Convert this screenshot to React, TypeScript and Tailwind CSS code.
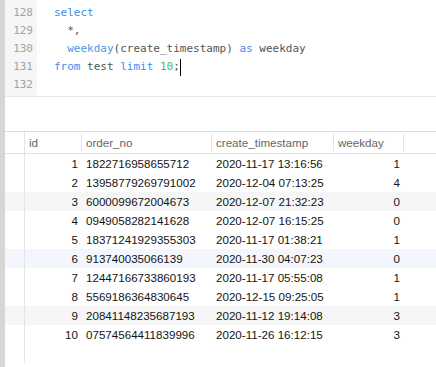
import React from "react";

const rows = [
  { id: 1, order: "1822716958655712", ts: "2020-11-17 13:16:56", wd: 1 },
  { id: 2, order: "13958779269791002", ts: "2020-12-04 07:13:25", wd: 4 },
  { id: 3, order: "6000099672004673", ts: "2020-12-07 21:32:23", wd: 0 },
  { id: 4, order: "0949058282141628", ts: "2020-12-07 16:15:25", wd: 0 },
  { id: 5, order: "18371241929355303", ts: "2020-11-17 01:38:21", wd: 1 },
  { id: 6, order: "913740035066139", ts: "2020-11-30 04:07:23", wd: 0 },
  { id: 7, order: "12447166733860193", ts: "2020-11-17 05:55:08", wd: 1 },
  { id: 8, order: "5569186364830645", ts: "2020-12-15 09:25:05", wd: 1 },
  { id: 9, order: "20841148235687193", ts: "2020-11-12 19:14:08", wd: 3 },
  { id: 10, order: "07574564411839996", ts: "2020-11-26 16:12:15", wd: 3 },
];

const mono = { fontFamily: '"DejaVu Sans Mono", "Liberation Mono", monospace' };

function Kw({ children }: { children: React.ReactNode }) {
  return <span className="text-[#3d8ced]">{children}</span>;
}

function rowBg(i: number) {
  // every third row gets a stripe, alternating gray / blue
  if (i % 3 !== 2) return "bg-white";
  return Math.floor(i / 3) % 2 === 0 ? "bg-[#f6f6f6]" : "bg-[#f3f6fc]";
}

function HeadCell({ w, children }: { w: string; children: React.ReactNode }) {
  return (
    <div className={`flex h-full shrink-0 items-center ${w}`}>
      <div className="flex-1 pl-[4px]">{children}</div>
      <div className="h-[17px] w-px bg-[#e2e2e2]" />
    </div>
  );
}

export default function App() {
  const lines = [128, 129, 130, 131, 132];
  const tableRows = [...rows.map((r) => r as (typeof rows)[number] | null), null];

  return (
    <div
      className="flex w-[436px] h-[367px] overflow-hidden bg-white"
      style={{ fontFamily: '"Liberation Sans", Arial, sans-serif' }}
    >
      <div className="w-[5px] shrink-0 bg-[#d6d6d6]" />

      <div className="flex flex-1 flex-col">
        {/* Editor */}
        <div className="flex h-[97px] shrink-0 border-b border-[#e8e8e8]" style={mono}>
          <div className="w-[32px] shrink-0 bg-[#f6f6f6] pt-[4px] pr-[4px] text-right text-[11px] leading-[18px] text-[#a3a3a3]">
            {lines.map((n) => (
              <div key={n}>{n}</div>
            ))}
          </div>
          <div className="flex-1 bg-white pt-[4px] pl-[17px] text-[11px] leading-[18px] text-[#555] whitespace-pre">
            <div>
              <Kw>select</Kw>
            </div>
            <div>{"  *,"}</div>
            <div>
              {"  "}
              <span className="text-[#4a98e6]">weekday</span>(create_timestamp) <Kw>as</Kw> weekday
            </div>
            <div>
              <Kw>from</Kw> test <Kw>limit</Kw> <span className="text-[#3ebd6b]">10</span>;
              <span className="inline-block h-[17px] w-px bg-black align-middle" />
            </div>
            <div>&nbsp;</div>
          </div>
        </div>

        <div className="h-[34px] shrink-0" />

        {/* Result grid */}
        <div className="flex-1 border-t border-[#dcdcdc] text-[11.6px]">
          <div className="flex h-[22px] items-center border-b border-[#e2e2e2] text-[#666]">
            <div className="h-full w-[20px] shrink-0 border-r border-[#e4e4e4]" />
            <HeadCell w="w-[57px]">id</HeadCell>
            <HeadCell w="w-[130px]">order_no</HeadCell>
            <HeadCell w="w-[122px]">create_timestamp</HeadCell>
            <HeadCell w="w-[70px]">weekday</HeadCell>
          </div>

          {tableRows.map((r, i) => (
            <div key={i} className={`flex h-[19px] items-center text-[#141414] ${rowBg(i)}`}>
              <div className="h-full w-[20px] shrink-0 border-r border-[#e4e4e4]" />
              <div className="w-[57px] pr-[4px] text-right">{r?.id}</div>
              <div className="w-[130px] pl-[4px]">{r?.order}</div>
              <div className="w-[122px] pl-[4px]">{r?.ts}</div>
              <div className="w-[70px] pr-[4px] text-right">{r?.wd}</div>
            </div>
          ))}
        </div>
      </div>
    </div>
  );
}
